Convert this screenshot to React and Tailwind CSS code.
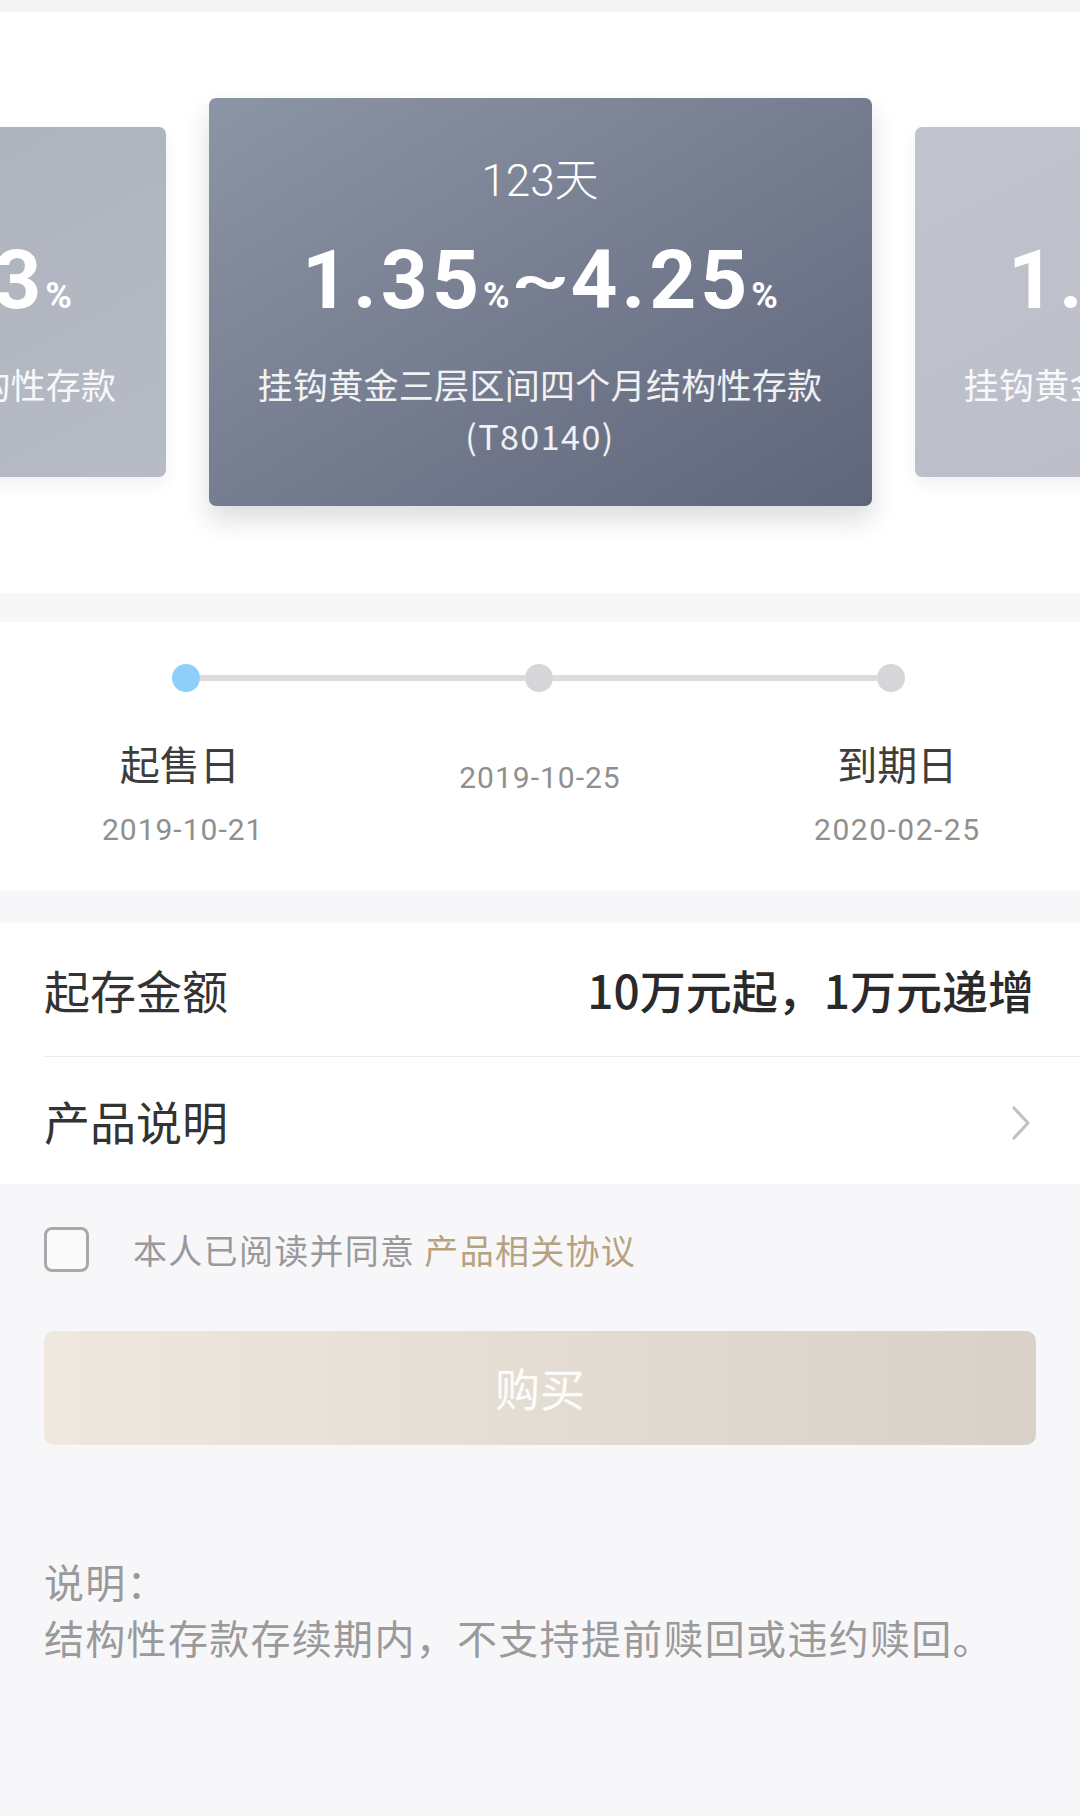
import React from "react";

const CJK = { fontFamily: '"Noto Sans CJK SC", "Noto Sans", sans-serif' };

function CardContent({ rateB }) {
  return (
    <div className="flex flex-col items-center text-white">
      <div
        className="h-[50px] leading-[50px] text-[44px] font-light mt-[2px]"
        style={{ fontFamily: 'Roboto, "Noto Sans CJK SC", sans-serif' }}
      >
        123天
      </div>
      <div
        className="mt-[29px] h-[90px] leading-[90px] flex items-baseline font-bold whitespace-nowrap"
        style={{ fontFamily: 'Roboto, "Liberation Sans", sans-serif' }}
      >
        <span className="text-[82px] tracking-[4px]">1.35</span>
        <span className="text-[36px]">%</span>
        <span className="inline-block text-[60px] mx-[11px] relative top-[-8px] scale-x-150">~</span>
        <span className="text-[82px] tracking-[4px]">{rateB}</span>
        <span className="text-[36px]">%</span>
      </div>
      <div className="mt-[33px] text-[35px] leading-[52px] tracking-[0.3px] text-white/90 whitespace-nowrap" style={CJK}>
        挂钩黄金三层区间四个月结构性存款
      </div>
      <div
        className="text-[34px] leading-[52px] text-white/90 tracking-[1.5px]"
        style={{ fontFamily: '"Noto Sans CJK SC", sans-serif' }}
      >
        (T80140)
      </div>
    </div>
  );
}

export default function App() {
  return (
    <div className="w-[1080px] min-h-[1816px] bg-[#f7f7f9] flex flex-col" style={CJK}>
      <div className="h-[12px] bg-[#f4f4f6]" />

      {/* carousel */}
      <div className="h-[581px] bg-white overflow-hidden">
        <div className="pt-[86px] flex justify-center items-start gap-[43px]">
          <div className="shrink-0 w-[663px] h-[350px] mt-[29px] rounded-[7px] bg-gradient-to-br from-[#a9aeba] to-[#b7bbc5] pt-[27px] overflow-hidden shadow-[0_8px_18px_rgba(0,0,0,0.06)]">
            <CardContent rateB="4.13" />
          </div>
          <div className="shrink-0 w-[663px] h-[408px] rounded-[7px] bg-gradient-to-br from-[#8c95a6] to-[#60667a] pt-[56px] shadow-[0_14px_26px_rgba(40,45,60,0.16)]">
            <CardContent rateB="4.25" />
          </div>
          <div className="shrink-0 w-[663px] h-[350px] mt-[29px] rounded-[7px] bg-gradient-to-br from-[#c1c4cd] to-[#b8bbc6] pt-[27px] overflow-hidden shadow-[0_8px_18px_rgba(0,0,0,0.06)]">
            <CardContent rateB="4.25" />
          </div>
        </div>
      </div>

      <div className="h-[29px]" />

      {/* timeline */}
      <div className="h-[269px] bg-white">
        <div className="pt-[42px] pl-[172px] pr-[175px] flex items-center">
          <div className="w-[28px] h-[28px] rounded-full bg-[#8ecffa] shrink-0" />
          <div className="flex-1 h-[6px] bg-[#dcdcdf]" />
          <div className="w-[28px] h-[28px] rounded-full bg-[#d6d6d9] shrink-0" />
          <div className="flex-1 h-[6px] bg-[#dcdcdf]" />
          <div className="w-[28px] h-[28px] rounded-full bg-[#d6d6d9] shrink-0" />
        </div>
        <div className="mt-[47px] px-[4px] grid grid-cols-3">
          <div className="flex flex-col items-center">
            <div className="text-[40px] leading-[48px] text-[#3d3d3d] -ml-[6px]">起售日</div>
            <div className="mt-[25px] text-[30px] leading-[36px] text-[#8f8f8f] tracking-[1px]" style={{ fontFamily: 'Roboto, sans-serif' }}>
              2019-10-21
            </div>
          </div>
          <div className="flex flex-col items-center pt-[21px]">
            <div className="text-[30px] leading-[36px] text-[#8f8f8f] tracking-[1px]" style={{ fontFamily: 'Roboto, sans-serif' }}>
              2019-10-25
            </div>
          </div>
          <div className="flex flex-col items-center">
            <div className="text-[40px] leading-[48px] text-[#3d3d3d]">到期日</div>
            <div className="mt-[25px] text-[30px] leading-[36px] text-[#8f8f8f] tracking-[1.5px]" style={{ fontFamily: 'Roboto, sans-serif' }}>
              2020-02-25
            </div>
          </div>
        </div>
      </div>

      <div className="h-[32px]" />

      {/* info */}
      <div className="bg-white">
        <div className="h-[133px] pl-[44px] pr-[46px] flex items-center justify-between">
          <span className="text-[46px] text-[#333333]">起存金额</span>
          <span className="text-[46px] font-medium text-[#2a2a2a]">10万元起，1万元递增</span>
        </div>
        <div className="ml-[44px] h-[1px] bg-[#ececee]" />
        <div className="h-[127px] pl-[44px] pr-[49px] flex items-center justify-between">
          <span className="text-[46px] text-[#333333]">产品说明</span>
          <svg width="20" height="36" viewBox="0 0 20 36" fill="none" className="mt-[4px]">
            <path d="M3 3 L17 18 L3 33" stroke="#c2c2c4" strokeWidth="3.2" strokeLinecap="round" strokeLinejoin="round" />
          </svg>
        </div>
      </div>

      {/* agreement */}
      <div className="mt-[43px] pl-[44px] flex items-center">
        <div className="w-[45px] h-[45px] rounded-[8px] border-[3px] border-[#a9a9ab] bg-white/40" />
        <div className="ml-[44px] text-[34px] leading-[44px] text-[#999999] tracking-[1.3px]">
          本人已阅读并同意 <span className="text-[#b7a27f]">产品相关协议</span>
        </div>
      </div>

      {/* button */}
      <div className="mt-[59px] mx-[44px] h-[114px] rounded-[10px] bg-gradient-to-r from-[#efe8de] to-[#d8d1c7] flex items-center justify-center">
        <span className="text-[45px] text-white/90">购买</span>
      </div>

      {/* note */}
      <div className="mt-[108px] px-[44px] text-[40px] leading-[56px] text-[#9a9a9a] tracking-[1.3px]">
        <div>说明：</div>
        <div>结构性存款存续期内，不支持提前赎回或违约赎回。</div>
      </div>
    </div>
  );
}
